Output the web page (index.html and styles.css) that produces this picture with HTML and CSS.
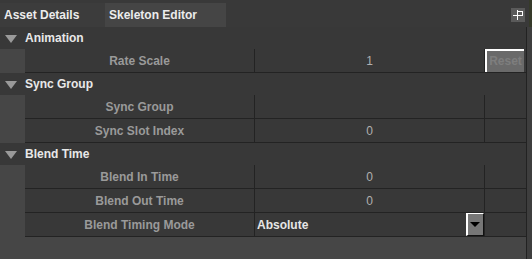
FILE: index.html
```html
<!DOCTYPE html>
<html>
<head>
<meta charset="utf-8">
<link rel="stylesheet" href="styles.css">
</head>
<body>
<div class="window">
  <div class="tabbar">
    <div class="tab tab-first">Asset Details</div>
    <div class="tab tab-second">Skeleton Editor</div>
    <div class="tabbar-fill"></div>
    <div class="pin">
      <svg width="14" height="14" viewBox="0 0 14 14">
        <rect x="0" y="0" width="14" height="14" fill="#5a5a5a"/>
        <line x1="2" y1="7.5" x2="6" y2="7.5" stroke="#fff" stroke-width="1"/>
        <line x1="6.5" y1="2" x2="6.5" y2="12" stroke="#fff" stroke-width="1"/>
        <rect x="6.5" y="3.5" width="5" height="4" fill="none" stroke="#fff" stroke-width="1"/>
      </svg>
    </div>
    <div class="olive"></div>
  </div>
  <div class="main">
    <div class="panel">
      <div class="cat"><span class="tri"></span><span class="cat-label">Animation</span></div>
      <div class="prop">
        <div class="name">Rate Scale</div>
        <div class="val">1</div>
        <div class="reset"><div class="reset-btn">Reset</div></div>
      </div>
      <div class="cat"><span class="tri"></span><span class="cat-label">Sync Group</span></div>
      <div class="prop">
        <div class="name">Sync Group</div>
        <div class="val"></div>
        <div class="reset"></div>
      </div>
      <div class="prop">
        <div class="name">Sync Slot Index</div>
        <div class="val">0</div>
        <div class="reset"></div>
      </div>
      <div class="cat"><span class="tri"></span><span class="cat-label">Blend Time</span></div>
      <div class="prop">
        <div class="name">Blend In Time</div>
        <div class="val">0</div>
        <div class="reset"></div>
      </div>
      <div class="prop">
        <div class="name">Blend Out Time</div>
        <div class="val">0</div>
        <div class="reset"></div>
      </div>
      <div class="prop">
        <div class="name">Blend Timing Mode</div>
        <div class="val val-combo">
          <span class="combo-text">Absolute</span>
          <span class="combo-btn"><span class="combo-arrow"></span></span>
        </div>
        <div class="reset"></div>
      </div>
    </div>
    <div class="edge"></div>
  </div>
</div>
</body>
</html>
```

FILE: styles.css
```css
html, body {
  margin: 0;
  padding: 0;
}
body {
  width: 532px;
  height: 259px;
  overflow: hidden;
  background: #464646;
  font-family: "Liberation Sans", Arial, sans-serif;
  font-size: 12px;
  font-weight: bold;
}
.window {
  display: flex;
  flex-direction: column;
  width: 532px;
  height: 259px;
}
.tabbar {
  display: flex;
  height: 27px;
  background: #393939;
  flex: none;
}
.tab {
  margin-top: 3px;
  height: 24px;
  line-height: 24px;
  color: #ececec;
  padding-left: 4px;
  box-sizing: border-box;
  white-space: nowrap;
}
.tab-first {
  width: 105px;
  background: #3c3c3c;
}
.tab-second {
  width: 121px;
  background: #454545;
}
.tabbar-fill {
  flex: 1;
}
.pin {
  margin-top: 8px;
  width: 14px;
  height: 14px;
  margin-right: 4px;
}
.pin svg {
  display: block;
}
.olive {
  width: 3px;
  background: #363a2a;
}
.main {
  display: flex;
  flex: 1;
}
.panel {
  width: 526px;
  display: flex;
  flex-direction: column;
}
.edge {
  width: 1px;
  background: #222;
}
.main::after {
  content: "";
  width: 5px;
  background: #3e3e3e;
}
.cat {
  height: 22px;
  display: flex;
  align-items: center;
  background: #383838;
}
.tri {
  width: 0;
  height: 0;
  border-left: 6px solid transparent;
  border-right: 6px solid transparent;
  border-top: 8px solid #9a9a9a;
  margin-left: 5px;
  margin-top: 1px;
}
.cat-label {
  margin-left: 8px;
  color: #e8e8e8;
  line-height: 22px;
}
.prop {
  margin-left: 25px;
  height: 24px;
  box-sizing: border-box;
  border-bottom: 1px solid #232323;
  background: #383838;
  display: flex;
}
.name {
  width: 230px;
  border-right: 1px solid #232323;
  text-align: center;
  color: #9a9a9a;
  line-height: 23px;
  padding-top: 1px;
  box-sizing: border-box;
  white-space: nowrap;
}
.val {
  width: 230px;
  border-right: 1px solid #232323;
  text-align: center;
  color: #b0b0b0;
  font-weight: normal;
  line-height: 23px;
  padding-top: 1px;
  box-sizing: border-box;
}
.reset {
  width: 39px;
}
.reset-btn {
  height: 23px;
  box-sizing: border-box;
  border-top: 2px solid #fff;
  border-left: 2px solid #fff;
  background: #6a6a6a;
  color: #7e7e7e;
  text-align: center;
  line-height: 21px;
}
.val-combo {
  display: flex;
  text-align: left;
  padding-top: 0;
}
.combo-text {
  flex: 1;
  padding-left: 2px;
  color: #e6e6e6;
  font-weight: bold;
  line-height: 23px;
  padding-top: 1px;
}
.combo-btn {
  width: 18px;
  height: 23px;
  box-sizing: border-box;
  border-top: 1px solid #fff;
  border-left: 2px solid #fff;
  border-bottom: 1px solid #111;
  border-right: 1px solid #111;
  background: #777;
  display: flex;
  align-items: center;
  justify-content: center;
}
.combo-arrow {
  width: 0;
  height: 0;
  border-left: 5px solid transparent;
  border-right: 5px solid transparent;
  border-top: 5px solid #000;
  margin-left: -1px;
}
```
